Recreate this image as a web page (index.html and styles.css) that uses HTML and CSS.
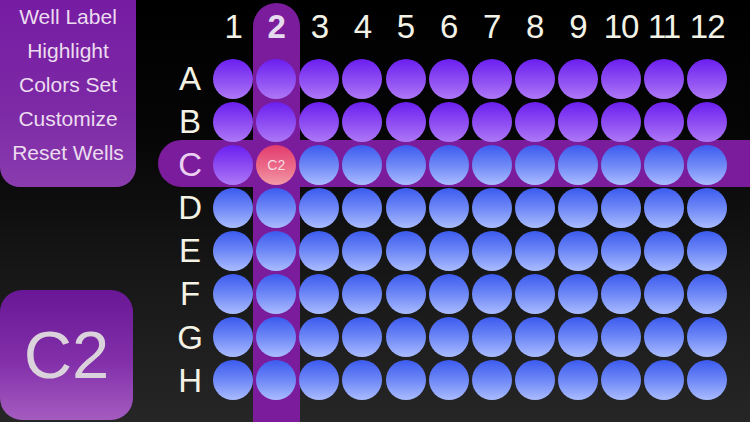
FILE: index.html
```html
<!DOCTYPE html>
<html>
<head>
<meta charset="utf-8">
<link rel="stylesheet" href="styles.css">
</head>
<body>
<div class="page">
  <aside class="side">
    <nav class="menu">
      <div class="item">Well Label</div>
      <div class="item">Highlight</div>
      <div class="item">Colors Set</div>
      <div class="item">Customize</div>
      <div class="item">Reset Wells</div>
    </nav>
    <div class="current">C2</div>
  </aside>
  <main class="plate">
    <div class="layer hl">
      <div class="colbar"></div>
      <div class="rowbar"></div>
    </div>
    <div class="layer wells">
      <div class="hd"></div>
      <div class="hd">1</div><div class="hd sel">2</div><div class="hd">3</div><div class="hd">4</div><div class="hd">5</div><div class="hd">6</div><div class="hd">7</div><div class="hd">8</div><div class="hd">9</div><div class="hd">10</div><div class="hd">11</div><div class="hd">12</div>

      <div class="lb">A</div>
      <div class="c"><span class="w p"></span></div><div class="c"><span class="w p"></span></div><div class="c"><span class="w p"></span></div><div class="c"><span class="w p"></span></div><div class="c"><span class="w p"></span></div><div class="c"><span class="w p"></span></div><div class="c"><span class="w p"></span></div><div class="c"><span class="w p"></span></div><div class="c"><span class="w p"></span></div><div class="c"><span class="w p"></span></div><div class="c"><span class="w p"></span></div><div class="c"><span class="w p"></span></div>

      <div class="lb">B</div>
      <div class="c"><span class="w p"></span></div><div class="c"><span class="w p"></span></div><div class="c"><span class="w p"></span></div><div class="c"><span class="w p"></span></div><div class="c"><span class="w p"></span></div><div class="c"><span class="w p"></span></div><div class="c"><span class="w p"></span></div><div class="c"><span class="w p"></span></div><div class="c"><span class="w p"></span></div><div class="c"><span class="w p"></span></div><div class="c"><span class="w p"></span></div><div class="c"><span class="w p"></span></div>

      <div class="lb sel">C</div>
      <div class="c"><span class="w p"></span></div><div class="c"><span class="w h">C2</span></div><div class="c"><span class="w b"></span></div><div class="c"><span class="w b"></span></div><div class="c"><span class="w b"></span></div><div class="c"><span class="w b"></span></div><div class="c"><span class="w b"></span></div><div class="c"><span class="w b"></span></div><div class="c"><span class="w b"></span></div><div class="c"><span class="w b"></span></div><div class="c"><span class="w b"></span></div><div class="c"><span class="w b"></span></div>

      <div class="lb">D</div>
      <div class="c"><span class="w b"></span></div><div class="c"><span class="w b"></span></div><div class="c"><span class="w b"></span></div><div class="c"><span class="w b"></span></div><div class="c"><span class="w b"></span></div><div class="c"><span class="w b"></span></div><div class="c"><span class="w b"></span></div><div class="c"><span class="w b"></span></div><div class="c"><span class="w b"></span></div><div class="c"><span class="w b"></span></div><div class="c"><span class="w b"></span></div><div class="c"><span class="w b"></span></div>

      <div class="lb">E</div>
      <div class="c"><span class="w b"></span></div><div class="c"><span class="w b"></span></div><div class="c"><span class="w b"></span></div><div class="c"><span class="w b"></span></div><div class="c"><span class="w b"></span></div><div class="c"><span class="w b"></span></div><div class="c"><span class="w b"></span></div><div class="c"><span class="w b"></span></div><div class="c"><span class="w b"></span></div><div class="c"><span class="w b"></span></div><div class="c"><span class="w b"></span></div><div class="c"><span class="w b"></span></div>

      <div class="lb">F</div>
      <div class="c"><span class="w b"></span></div><div class="c"><span class="w b"></span></div><div class="c"><span class="w b"></span></div><div class="c"><span class="w b"></span></div><div class="c"><span class="w b"></span></div><div class="c"><span class="w b"></span></div><div class="c"><span class="w b"></span></div><div class="c"><span class="w b"></span></div><div class="c"><span class="w b"></span></div><div class="c"><span class="w b"></span></div><div class="c"><span class="w b"></span></div><div class="c"><span class="w b"></span></div>

      <div class="lb">G</div>
      <div class="c"><span class="w b"></span></div><div class="c"><span class="w b"></span></div><div class="c"><span class="w b"></span></div><div class="c"><span class="w b"></span></div><div class="c"><span class="w b"></span></div><div class="c"><span class="w b"></span></div><div class="c"><span class="w b"></span></div><div class="c"><span class="w b"></span></div><div class="c"><span class="w b"></span></div><div class="c"><span class="w b"></span></div><div class="c"><span class="w b"></span></div><div class="c"><span class="w b"></span></div>

      <div class="lb">H</div>
      <div class="c"><span class="w b"></span></div><div class="c"><span class="w b"></span></div><div class="c"><span class="w b"></span></div><div class="c"><span class="w b"></span></div><div class="c"><span class="w b"></span></div><div class="c"><span class="w b"></span></div><div class="c"><span class="w b"></span></div><div class="c"><span class="w b"></span></div><div class="c"><span class="w b"></span></div><div class="c"><span class="w b"></span></div><div class="c"><span class="w b"></span></div><div class="c"><span class="w b"></span></div>
    </div>
  </main>
</div>
</body>
</html>
```

FILE: styles.css
```css
html, body {
  margin: 0;
  padding: 0;
  width: 750px;
  height: 422px;
  overflow: hidden;
}
body {
  background: linear-gradient(to bottom, #000 0%, #050505 30%, #171717 65%, #262626 100%);
  font-family: "Liberation Sans", Arial, sans-serif;
}
.page {
  display: flex;
  height: 422px;
}
.side {
  width: 136px;
  display: flex;
  flex-direction: column;
  flex-shrink: 0;
}
.menu {
  width: 136px;
  height: 187px;
  box-sizing: border-box;
  padding-bottom: 17px;
  border-radius: 0 0 20px 20px;
  background: linear-gradient(to bottom, #761ca3 0%, #7d2aa6 60%, #8a3cae 100%);
}
.item {
  height: 34px;
  line-height: 34px;
  text-align: center;
  font-size: 21px;
  color: #ecdcef;
  white-space: nowrap;
}
.current {
  margin-top: auto;
  margin-bottom: 2px;
  width: 133px;
  height: 130px;
  border-radius: 22px;
  background: linear-gradient(to bottom, #6a1797 0%, #822fa9 55%, #a45cc0 100%);
  color: #dad3db;
  font-size: 67px;
  display: flex;
  align-items: center;
  justify-content: center;
  line-height: 1;
  padding-bottom: 2px;
  box-sizing: border-box;
}
.plate {
  margin-left: 32.5px;
  display: grid;
  align-self: flex-start;
}
.layer {
  grid-area: 1 / 1;
  display: grid;
  grid-template-columns: repeat(13, 43.1px);
  grid-template-rows: 57px repeat(8, 43.1px);
}
.colbar {
  grid-column: 3;
  grid-row: 1 / -1;
  justify-self: center;
  width: 46.7px;
  margin-top: 3px;
  margin-bottom: -30px;
  border-radius: 23.4px 23.4px 0 0;
  background: #7a1c9c;
}
.rowbar {
  grid-column: 1 / -1;
  grid-row: 4;
  margin: -3.2px -30px -0.5px -10.2px;
  border-radius: 23.5px 0 0 23.5px;
  background: #7a1c9c;
}
.hd {
  font-size: 33px;
  line-height: 40px;
  padding-top: 7px;
  text-align: center;
  color: #f3f2e6;
  white-space: nowrap;
  letter-spacing: -1px;
}
.hd.sel {
  font-weight: bold;
  color: #e6dbee;
}
.lb {
  font-size: 33px;
  line-height: 43.1px;
  text-align: center;
  color: #f3f2e4;
}
.lb.sel {
  color: #eacff0;
}
.c {
  display: flex;
  align-items: center;
  justify-content: center;
}
.w {
  width: 40px;
  height: 40px;
  border-radius: 50%;
  display: flex;
  align-items: center;
  justify-content: center;
}
.w.p {
  background: linear-gradient(to bottom, #6b1ff0 0%, #8c4af2 50%, #ad78f6 100%);
}
.w.b {
  background: linear-gradient(to bottom, #3c5bf0 0%, #6e88f6 50%, #aabcff 100%);
}
.w.h {
  background: linear-gradient(to bottom, #e23c6e 0%, #eb6a88 55%, #f49aa8 100%);
  color: #f6dbe3;
  font-size: 14px;
}
```
